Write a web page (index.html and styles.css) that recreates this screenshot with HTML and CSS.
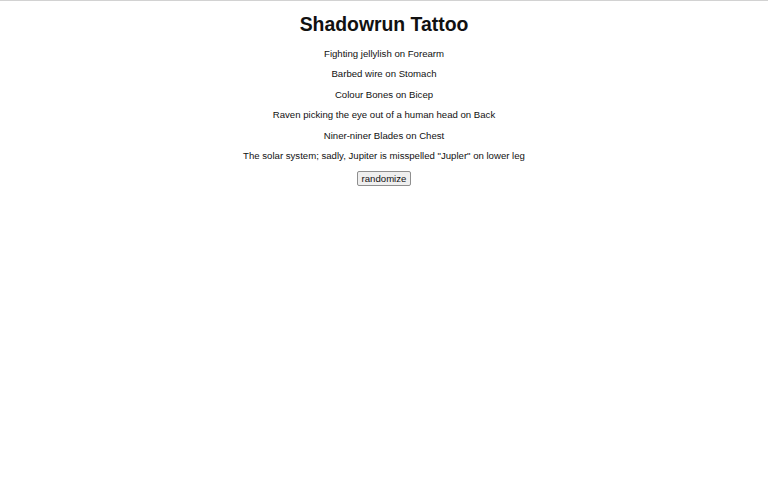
FILE: index.html
```html
<!DOCTYPE html>
<html lang="en">
<head>
    <meta charset="UTF-8">
    <title>Shadowrun Tattoo</title>
    <link rel="stylesheet" href="styles.css">
</head>
<body>
    <div class="wrap">
        <h1>Shadowrun Tattoo</h1>
        <div id="tattoos">
            <p>Fighting jellylish on Forearm</p>
            <p>Barbed wire on Stomach</p>
            <p>Colour Bones on Bicep</p>
            <p>Raven picking the eye out of a human head on Back</p>
            <p>Niner-niner Blades on Chest</p>
            <p>The solar system; sadly, Jupiter is misspelled "Jupler" on lower leg</p>
        </div>
        <button class="random-btn">randomize</button>
    </div>
</body>
</html>
```

FILE: styles.css
```css
html {
    height: 100%;
}

body {
    margin: 0;
    min-height: 100%;
    box-sizing: border-box;
    border-top: 1px solid #d2d2d2;
    font-family: "Liberation Sans", Arial, sans-serif;
    color: #111;
    background: #fff;
}

.wrap {
    text-align: center;
    padding-top: 12px;
}

h1 {
    font-size: 19.4px;
    margin: 0 0 8px;
}

#tattoos p {
    font-size: 9.6px;
    margin: 0;
    line-height: 20.4px;
}

.random-btn {
    margin-top: 5px;
    font-family: "Liberation Sans", Arial, sans-serif;
    font-size: 9.6px;
    line-height: 11px;
    padding: 1px 4px;
    background: #efefef;
    border: 1px solid #8f8f8f;
    border-radius: 2px;
    color: #111;
}
```
